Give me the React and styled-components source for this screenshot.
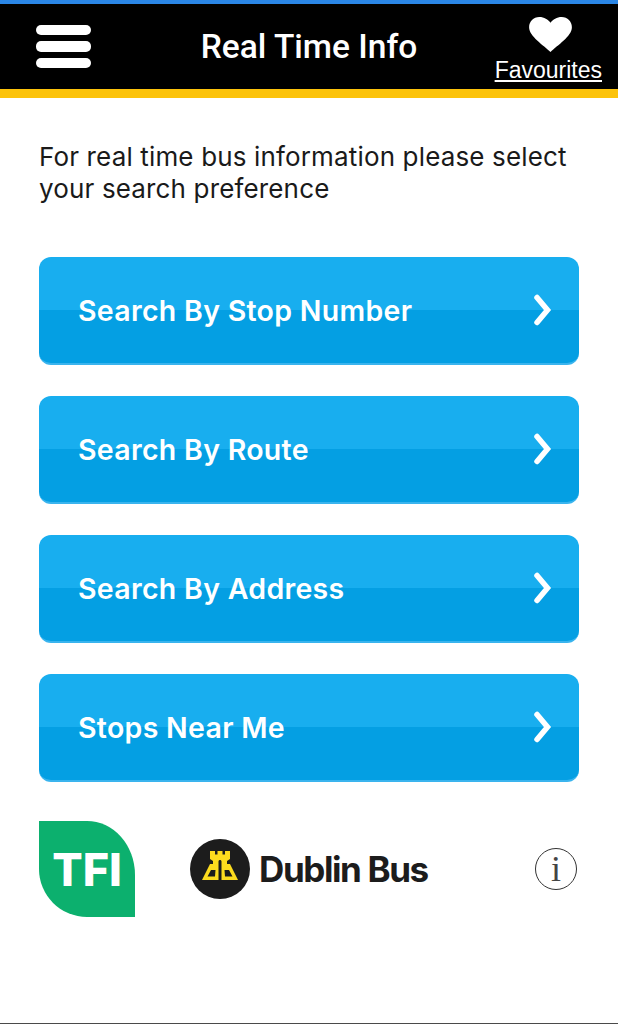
import React from 'react';
import styled, { createGlobalStyle } from 'styled-components';

const GlobalStyle = createGlobalStyle`
  html, body {
    margin: 0;
    padding: 0;
    background: #fff;
  }
  * {
    box-sizing: border-box;
  }
`;

const Page = styled.div`
  display: flex;
  flex-direction: column;
  height: 1024px;
  overflow: hidden;
  background: #fff;
  border-top: 4px solid #2a86e6;
  border-bottom: 1px solid #4a4a4a;
`;

const Header = styled.header`
  display: grid;
  grid-template-columns: 1fr auto 1fr;
  align-items: center;
  height: 94px;
  background: #000;
  border-bottom: 9px solid #fcc30b;
`;

const MenuButton = styled.div`
  display: flex;
  flex-direction: column;
  gap: 6px;
  width: 55px;
  margin-left: 36px;
`;

const MenuBar = styled.span`
  display: block;
  height: 10.5px;
  border-radius: 5px;
  background: #fff;
`;

const Title = styled.h1`
  margin: 0;
  color: #fff;
  font-family: Roboto, sans-serif;
  font-size: 33.5px;
  font-weight: 500;
  line-height: 1;
`;

const Favourites = styled.div`
  justify-self: end;
  display: flex;
  flex-direction: column;
  align-items: center;
  gap: 5px;
  margin: 6px 16px 0 0;
`;

const HeartIcon = styled.svg`
  display: block;
  margin-left: 4px;
`;

const FavouritesLabel = styled.span`
  color: #fff;
  font-family: 'Liberation Sans', sans-serif;
  font-size: 23px;
  line-height: 26px;
  text-decoration: underline;
  text-underline-offset: 2px;
`;

const Content = styled.main`
  display: flex;
  flex-direction: column;
  padding: 43px 39px 0;
`;

const Intro = styled.p`
  margin: 0 0 52px;
  color: #1a1a1a;
  font-family: Inter, sans-serif;
  font-size: 26px;
  font-weight: 400;
  letter-spacing: 0.15px;
  line-height: 32px;
`;

const ButtonList = styled.nav`
  display: flex;
  flex-direction: column;
  gap: 31px;
`;

const SearchButton = styled.a`
  display: flex;
  align-items: center;
  justify-content: space-between;
  height: 108px;
  padding: 0 27px 0 39px;
  border-radius: 12px;
  border-bottom: 2px solid #3ab4ee;
  background: linear-gradient(#18aeef 0, #18aeef 50%, #049fe3 50%, #049fe3 100%);
  color: #fff;
  font-family: Inter, sans-serif;
  font-size: 28.5px;
  font-weight: 600;
  letter-spacing: 0.3px;
  text-decoration: none;
`;

const Footer = styled.footer`
  display: flex;
  align-items: center;
  margin-top: 39px;
`;

const TfiLogo = styled.div`
  display: flex;
  align-items: center;
  justify-content: center;
  width: 96px;
  height: 96px;
  border-radius: 0 48px 0 48px / 0 54px 0 48px;
  background: #0cb06e;
  color: #fff;
  font-family: Inter, sans-serif;
  font-size: 45px;
  font-weight: 800;
  line-height: 1;
`;

const DublinBusLogo = styled.div`
  display: flex;
  align-items: center;
  gap: 9px;
  margin-left: 55px;
  color: #1c1c1c;
  font-family: Inter, sans-serif;
  font-size: 35px;
  font-weight: 700;
  letter-spacing: -1.4px;
`;

const InfoButton = styled.div`
  display: flex;
  align-items: center;
  justify-content: center;
  width: 42px;
  height: 42px;
  margin-left: auto;
  margin-right: 2px;
  border: 1.5px solid #333;
  border-radius: 50%;
  color: #444;
  font-family: 'Liberation Serif', serif;
  font-size: 36px;
  line-height: 1;
`;

const Heart = () => (
  <HeartIcon width="43" height="35" viewBox="0 0 44 36" aria-hidden="true">
    <path
      d="M22 36C15 29 0 20 0 10.5 0 4.5 4.5 0 10.5 0 15.5 0 19.5 2.5 22 6 24.5 2.5 28.5 0 33.5 0 39.5 0 44 4.5 44 10.5 44 20 29 29 22 36Z"
      fill="#fff"
    />
  </HeartIcon>
);

const Chevron = () => (
  <svg width="18" height="32" viewBox="0 0 18 32" aria-hidden="true">
    <path d="M3 3.500 13.500 16 3 28.500" fill="none" stroke="#fff" strokeWidth="5.500" strokeLinecap="round" strokeLinejoin="miter" />
  </svg>
);

const DublinBusMark = () => (
  <svg width="60" height="60" viewBox="0 0 60 60" aria-hidden="true">
    <circle cx="30" cy="30" r="30" fill="#1c1c1c" />
    <path
      fillRule="evenodd"
      fill="#fcdb1e"
      d="M20 12H25V15.500H27.500V12H32.500V15.500H35V12H40V20L37 22V25H40L48 41H31.500V22.500C31.500 20.500 28.500 20.500 28.500 22.500V41H12L20 25H23V22L20 20ZM21 31 17.500 37.500H25L25.500 31ZM34.500 31 35 37.500H42.500L39 31Z"
    />
  </svg>
);

const buttons = ['Search By Stop Number', 'Search By Route', 'Search By Address', 'Stops Near Me'];

export default function App() {
  return (
    <Page>
      <GlobalStyle />
      <Header>
        <MenuButton>
          <MenuBar />
          <MenuBar />
          <MenuBar />
        </MenuButton>
        <Title>Real Time Info</Title>
        <Favourites>
          <Heart />
          <FavouritesLabel>Favourites</FavouritesLabel>
        </Favourites>
      </Header>
      <Content>
        <Intro>For real time bus information please select your search preference</Intro>
        <ButtonList>
          {buttons.map(label => (
            <SearchButton key={label}>
              {label}
              <Chevron />
            </SearchButton>
          ))}
        </ButtonList>
        <Footer>
          <TfiLogo>TFI</TfiLogo>
          <DublinBusLogo>
            <DublinBusMark />
            Dublin Bus
          </DublinBusLogo>
          <InfoButton>i</InfoButton>
        </Footer>
      </Content>
    </Page>
  );
}
